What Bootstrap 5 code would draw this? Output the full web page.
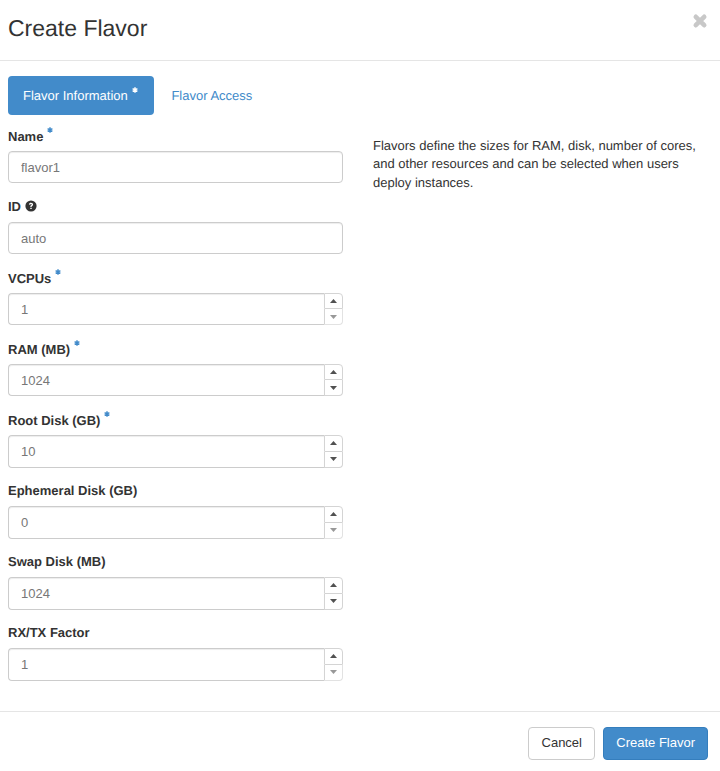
<!DOCTYPE html>
<html lang="en">
<head>
<meta charset="utf-8">
<title>Create Flavor</title>
<link rel="stylesheet" href="https://cdn.jsdelivr.net/npm/bootstrap@5.3.0/dist/css/bootstrap.min.css">
<style>
html,body{background:#fff;}
body{font-family:"Liberation Sans",Arial,sans-serif;font-size:13px;line-height:18.57px;color:#333;margin:0;text-rendering:geometricPrecision;}
.dlg-head{height:61px;border-bottom:1px solid #e5e5e5;padding:14px 8px 0;position:relative;}
.dlg-title{font-size:23px;line-height:28px;font-weight:400;color:#333;margin:0;font-family:inherit;}
.dlg-close{position:absolute;right:12px;top:13px;width:16px;height:16px;}
.dlg-body{padding:15px 8px 0;height:650px;}
.tab-row{gap:2px;margin-bottom:10px;}
.tab-link{display:block;padding:10.5px 15px 0;height:39px;border-radius:4px;color:#428bca;font-size:13px;text-decoration:none;}
.tab-link.is-on{background:#428bca;color:#fff;padding-right:16px;}
.tab-link svg{vertical-align:7px;margin-left:1px;}
.form-pane{width:335px;flex:none;}
.side-pane{padding:11.7px 0 0 30px;width:353px;color:#333;}
.side-pane p{margin:0;line-height:18.57px;}
.fld{height:71px;}
.fld-label{display:block;font-weight:700;height:26px;margin:0;padding-top:2px;line-height:18px;color:#333;}
.fld-label svg.ast{vertical-align:8px;}
.fld-label svg.help{vertical-align:-1px;}
.fld-input.form-control{height:32px;border:1px solid #ccc;border-radius:4px;padding:6px 12px;font-size:13px;line-height:18.57px;color:#555;box-shadow:inset 0 1px 1px rgba(0,0,0,.075);font-family:inherit;}
.fld-input.form-control::placeholder{color:#777;opacity:1;}
.tall .fld-input.form-control,.tall .spin-col{height:33px;}
.spin-wrap{display:flex;}
.spin-wrap .fld-input.form-control{border-right:0;border-radius:4px 0 0 4px;flex:1;min-width:0;}
.spin-col{width:19px;flex:none;height:32px;display:flex;flex-direction:column;}
.spin-btn{flex:1 1 50%;background:#fff;border:1px solid #d4d4d4;padding:0;display:flex;align-items:center;justify-content:center;min-height:0;}
.spin-btn.up{border-radius:0 4px 0 0;}
.spin-btn.down{border-radius:0 0 4px 0;border-top:0;}
.spin-btn svg{opacity:.85;}
.spin-btn.dim svg{opacity:.5;}
.spin-btn.dim{border-color:#e2e2e2;border-left-color:#d4d4d4;}
.dlg-foot{border-top:1px solid #e5e5e5;height:60px;padding:15px 12px 0 0;}
.act-btn{height:33px;font-size:13px;padding:6px 12px;border-radius:4px;line-height:18.57px;}
.act-cancel{background:#fff;border:1px solid #ccc;color:#333;min-width:67px;}
.act-go{background:#428bca;border:1px solid #357ebd;color:#fff;}
</style>
</head>
<body>
<svg width="0" height="0" class="d-block" aria-hidden="true" style="position:absolute">
<defs>
<symbol id="ast" viewBox="0 0 7 7"><path d="M3.500 .3V6.700M.7 1.900 6.300 5.100M6.300 1.900 .7 5.100" stroke="currentColor" stroke-width="1.700" fill="none"/></symbol>
</defs>
</svg>
<div class="dlg-head">
  <h1 class="dlg-title">Create Flavor</h1>
  <svg class="dlg-close" viewBox="0 0 16 16" aria-label="Close"><path d="M3.800 3.800 12.200 12.200M12.200 3.800 3.800 12.200" stroke="#c8c8c8" stroke-width="4.600" stroke-linecap="round"/></svg>
</div>
<div class="dlg-body">
  <nav class="d-flex tab-row">
    <a class="tab-link is-on" href="#">Flavor Information <svg width="6" height="6" style="color:#fff"><use href="#ast"/></svg></a>
    <a class="tab-link" href="#">Flavor Access</a>
  </nav>
  <div class="d-flex">
    <form class="form-pane">
      <div class="fld"><label class="fld-label">Name <svg class="ast" width="6" height="6" style="color:#428bca"><use href="#ast"/></svg></label><input class="form-control fld-input" placeholder="flavor1"></div>
      <div class="fld"><label class="fld-label">ID <svg class="help" width="12" height="12" viewBox="0 0 12 12"><circle cx="6" cy="6" r="5.600" fill="#333"/><path d="M3.900 4.600C4 3.400 4.900 2.800 6 2.800c1.200 0 2.100.7 2.100 1.700 0 1.500-1.500 1.400-1.500 2.400H5.300c0-1.600 1.400-1.600 1.400-2.300 0-.4-.3-.6-.7-.6-.5 0-.8.300-.8.800zM5.300 7.700h1.400v1.400H5.300z" fill="#fff"/></svg></label><input class="form-control fld-input" placeholder="auto"></div>
      <div class="fld"><label class="fld-label">VCPUs <svg class="ast" width="6" height="6" style="color:#428bca"><use href="#ast"/></svg></label><div class="spin-wrap"><input class="form-control fld-input" placeholder="1"><div class="spin-col"><div class="spin-btn up"><svg width="7" height="4"><path d="M3.500 0 7 4H0z" fill="#333"/></svg></div><div class="spin-btn down dim"><svg width="7" height="4"><path d="M0 0H7L3.500 4z" fill="#333"/></svg></div></div></div></div>
      <div class="fld"><label class="fld-label">RAM (MB) <svg class="ast" width="6" height="6" style="color:#428bca"><use href="#ast"/></svg></label><div class="spin-wrap"><input class="form-control fld-input" placeholder="1024"><div class="spin-col"><div class="spin-btn up"><svg width="7" height="4"><path d="M3.500 0 7 4H0z" fill="#333"/></svg></div><div class="spin-btn down"><svg width="7" height="4"><path d="M0 0H7L3.500 4z" fill="#333"/></svg></div></div></div></div>
      <div class="fld tall"><label class="fld-label">Root Disk (GB) <svg class="ast" width="6" height="6" style="color:#428bca"><use href="#ast"/></svg></label><div class="spin-wrap"><input class="form-control fld-input" placeholder="10"><div class="spin-col"><div class="spin-btn up"><svg width="7" height="4"><path d="M3.500 0 7 4H0z" fill="#333"/></svg></div><div class="spin-btn down"><svg width="7" height="4"><path d="M0 0H7L3.500 4z" fill="#333"/></svg></div></div></div></div>
      <div class="fld tall"><label class="fld-label">Ephemeral Disk (GB)</label><div class="spin-wrap"><input class="form-control fld-input" placeholder="0"><div class="spin-col"><div class="spin-btn up"><svg width="7" height="4"><path d="M3.500 0 7 4H0z" fill="#333"/></svg></div><div class="spin-btn down dim"><svg width="7" height="4"><path d="M0 0H7L3.500 4z" fill="#333"/></svg></div></div></div></div>
      <div class="fld tall"><label class="fld-label">Swap Disk (MB)</label><div class="spin-wrap"><input class="form-control fld-input" placeholder="1024"><div class="spin-col"><div class="spin-btn up"><svg width="7" height="4"><path d="M3.500 0 7 4H0z" fill="#333"/></svg></div><div class="spin-btn down"><svg width="7" height="4"><path d="M0 0H7L3.500 4z" fill="#333"/></svg></div></div></div></div>
      <div class="fld tall"><label class="fld-label">RX/TX Factor</label><div class="spin-wrap"><input class="form-control fld-input" placeholder="1"><div class="spin-col"><div class="spin-btn up"><svg width="7" height="4"><path d="M3.500 0 7 4H0z" fill="#333"/></svg></div><div class="spin-btn down dim"><svg width="7" height="4"><path d="M0 0H7L3.500 4z" fill="#333"/></svg></div></div></div></div>
    </form>
    <div class="side-pane"><p>Flavors define the sizes for RAM, disk, number of cores, and other resources and can be selected when users deploy instances.</p></div>
  </div>
</div>
<div class="dlg-foot d-flex justify-content-end gap-2">
  <button type="button" class="btn act-btn act-cancel">Cancel</button>
  <button type="button" class="btn act-btn act-go">Create Flavor</button>
</div>
<script src="https://cdn.jsdelivr.net/npm/bootstrap@5.3.0/dist/js/bootstrap.bundle.min.js"></script>
</body>
</html>
